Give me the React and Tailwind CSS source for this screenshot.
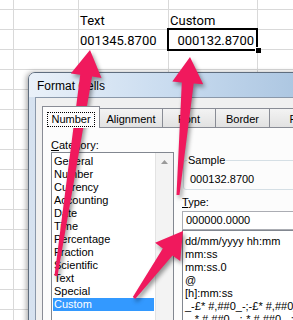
import React from 'react';

const categories = [
    'General', 'Number', 'Currency', 'Accounting', 'Date', 'Time',
    'Percentage', 'Fraction', 'Scientific', 'Text', 'Special', 'Custom',
];

const types = [
    'dd/mm/yyyy hh:mm',
    'mm:ss',
    'mm:ss.0',
    '@',
    '[h]:mm:ss',
    '_-£* #,##0_-;-£* #,##0_-;_-£* "-"_-;_-@_-',
    '_-* #,##0_-;-* #,##0_-;_-* "-"_-;_-@_-',
];

// tapered callout arrow, tail -> tip
function arrowPoints(tx, ty, px, py, headLen = 26, headHalf = 15.5, shaftHalf = 6, tailHalf = 1.5) {
    const dx = px - tx;
    const dy = py - ty;
    const len = Math.hypot(dx, dy);
    const ux = dx / len;
    const uy = dy / len;
    const nx = -uy;
    const ny = ux;
    const bx = px - ux * headLen;
    const by = py - uy * headLen;
    const pts = [
        [tx + nx * tailHalf, ty + ny * tailHalf],
        [bx + nx * shaftHalf, by + ny * shaftHalf],
        [bx + nx * headHalf, by + ny * headHalf],
        [px, py],
        [bx - nx * headHalf, by - ny * headHalf],
        [bx - nx * shaftHalf, by - ny * shaftHalf],
        [tx - nx * tailHalf, ty - ny * tailHalf],
    ];
    return pts.map(([x, y]) => `${x.toFixed(1)},${y.toFixed(1)}`).join(' ');
}

function Sheet() {
    const cols = ['w-[14px]', 'w-[65px]', 'w-[90px]', 'w-[89px]', 'w-[60px]'];
    const rows = Array.from({ length: 17 });
    const content = {
        '1-2': { text: 'Text' },
        '1-3': { text: 'Custom' },
        '2-2': { text: '001345.8700' },
        '2-3': { text: '000132.8700', right: true },
    };

    return (
        <div className="flex flex-col font-['Roboto',Arial,sans-serif] text-[13px] text-black">
            {rows.map((_, r) => (
                <div key={r} className={`flex shrink-0 ${r === 0 ? 'h-[10px]' : 'h-[20px]'}`}>
                    {cols.map((w, c) => {
                        const cell = content[`${r}-${c}`];
                        return (
                            <div
                                key={c}
                                className={`${w} shrink-0 border-r border-b border-[#d9d9d9] flex items-end leading-[15px] pb-[1px] ${cell && cell.right ? 'justify-end pr-[3px]' : 'pl-[1px]'}`}
                            >
                                {cell ? cell.text : null}
                            </div>
                        );
                    })}
                </div>
            ))}
        </div>
    );
}

function Tab({ label, width }) {
    return (
        <div className={`${width} h-[19px] shrink-0 border-t border-r border-[#898c95] bg-gradient-to-b from-[#f3f3f3] to-[#e2e2e2] flex items-center justify-center pt-[2px] leading-[13px]`}>
            {label}
        </div>
    );
}

function FormatDialog() {
    return (
        <div className="absolute left-[28px] top-[72px] w-[290px] h-[260px] flex flex-col rounded-tl-[7px] border border-[#5f6d7e] bg-gradient-to-r from-[#d6e2f0] to-[#c3d5ea] shadow-[-2px_0_5px_rgba(0,0,0,0.3)] font-['Liberation_Sans',Arial,sans-serif] text-[11px] text-black overflow-hidden">
            {/* title bar */}
            <div className="h-[24px] shrink-0 flex items-center pl-[8px] pt-[2px] text-[12px] bg-gradient-to-r from-[#eaf1f9] via-[#c8dbef] to-[#a8c3df]">
                Format Cells
            </div>

            {/* client */}
            <div className="flex-1 ml-[6px] border-l border-t border-[#8a98aa] bg-[#f0f0f0] pl-[6px] pt-[8px]">
                {/* tab strip */}
                <div className="flex items-end">
                    <div className="relative z-10 w-[58px] h-[22px] shrink-0 -mb-px border-t border-x border-[#898c95] bg-[#fcfcfc] px-[4px] pt-[5px]">
                        <div className="h-[15px] border border-dotted border-black flex items-center justify-center leading-[13px]">
                            Number
                        </div>
                    </div>
                    <Tab label="Alignment" width="w-[63px]" />
                    <Tab label="Font" width="w-[53px]" />
                    <Tab label="Border" width="w-[54px]" />
                    <Tab label="Fill" width="w-[54px]" />
                </div>

                {/* tab page */}
                <div className="h-[220px] border-l border-t border-[#898c95] bg-[#fcfcfc] flex pl-[8px]">
                    {/* category */}
                    <div className="w-[123px] shrink-0 flex flex-col">
                        <div className="mt-[11px] leading-[13px]">
                            <span className="underline">C</span>ategory:
                        </div>
                        <div className="flex-1 flex border border-[#828790] bg-white">
                            <div className="flex-1 pt-[2px] px-[1px]">
                                {categories.map((c) => (
                                    <div
                                        key={c}
                                        className={`h-[13px] leading-[13px] pl-[1px] whitespace-nowrap ${c === 'Custom' ? 'bg-[#3399ff] text-white' : ''}`}
                                    >
                                        {c}
                                    </div>
                                ))}
                            </div>
                            <div className="w-[18px] shrink-0 border-l border-[#e3e3e3] bg-[#f3f3f3] flex flex-col">
                                <div className="h-[17px] flex items-center justify-center pt-[1px]">
                                    <svg width="7" height="4" viewBox="0 0 7 4">
                                        <path d="M3.5 0 L7 4 L0 4 Z" fill="#9a9a9a" />
                                    </svg>
                                </div>
                            </div>
                        </div>
                    </div>

                    {/* sample + type */}
                    <div className="flex-1 ml-[8px] flex flex-col min-w-0">
                        <fieldset className="mt-[26px] ml-[1px] border border-[#d5dfe5] rounded-[3px]">
                            <legend className="ml-[3px] px-[1px] leading-[13px]">Sample</legend>
                            <div className="leading-[13px] pt-[6px] pb-[3px] pl-[6px]">000132.8700</div>
                        </fieldset>
                        <div className="mt-[6px] leading-[13px]">
                            <span className="underline">T</span>ype:
                        </div>
                        <div className="mt-[2px] h-[19px] border border-[#abadb3] bg-white flex items-center pl-[3px] leading-[13px]">
                            000000.0000
                        </div>
                        <div className="flex-1 border-t border-l border-[#828790] bg-white pt-[4px] pl-[2px]">
                            {types.map((t) => (
                                <div key={t} className="h-[13px] leading-[13px] whitespace-nowrap">
                                    {t}
                                </div>
                            ))}
                        </div>
                    </div>
                </div>
            </div>
        </div>
    );
}

function Arrows() {
    const arrows = [
        [56, 276, 90, 50],
        [178, 195, 190, 57],
        [134, 298, 183, 231],
    ];
    return (
        <svg
            className="absolute inset-0 pointer-events-none drop-shadow-[2px_3px_2px_rgba(0,0,0,0.4)]"
            width="293"
            height="320"
            viewBox="0 0 293 320"
        >
            {arrows.map(([tx, ty, px, py], i) => (
                <polygon key={i} points={arrowPoints(tx, ty, px, py)} fill="#f0195d" strokeLinejoin="round" />
            ))}
        </svg>
    );
}

export default function App() {
    return (
        <div className="relative w-[293px] h-[320px] overflow-hidden bg-white">
            <Sheet />

            {/* active cell */}
            <div className="absolute left-[167px] top-[28px] w-[91px] h-[23px] border-2 border-black" />
            <div className="absolute left-[255px] top-[47px] w-[6px] h-[6px] bg-black border-l border-t border-white" />

            <FormatDialog />
            <Arrows />
        </div>
    );
}
